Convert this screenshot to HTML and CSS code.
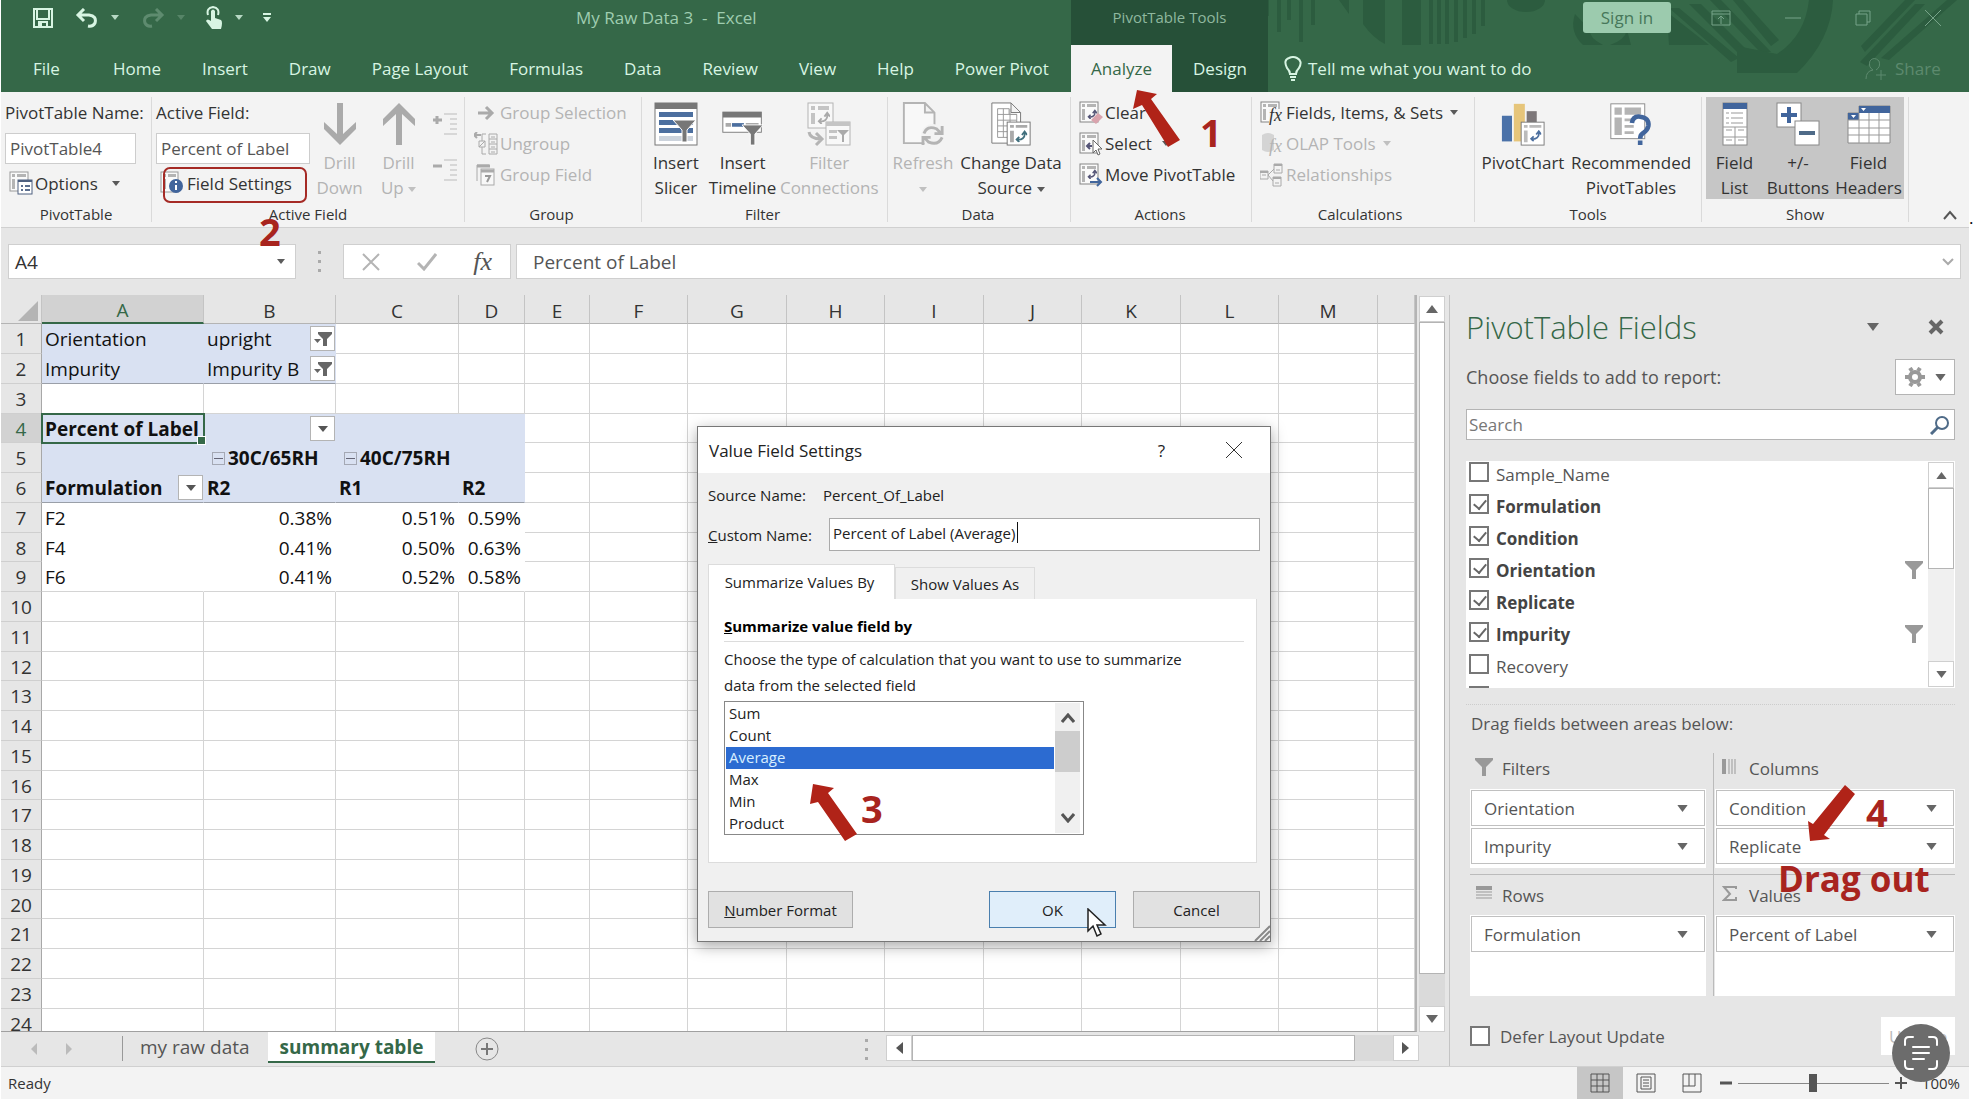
FILE: index.html
```html
<!DOCTYPE html>
<html lang="en">
<head>
<meta charset="utf-8">
<title>My Raw Data 3 - Excel</title>
<link rel="stylesheet" href="styles.css">
</head>
<body>
<!-- shared icons -->
<svg class="defs" width="0" height="0">
  <symbol id="caret" viewBox="0 0 10 6"><path d="M0 0H10L5 6Z" fill="currentColor"/></symbol>
  <symbol id="tri-up" viewBox="0 0 12 8"><path d="M6 0L12 8H0Z" fill="#666"/></symbol>
  <symbol id="tri-down" viewBox="0 0 12 8"><path d="M0 0H12L6 8Z" fill="#666"/></symbol>
  <symbol id="funnel" viewBox="0 0 18 18"><path d="M0 0H18V2L11 9V18H7V9L0 2Z" fill="#999"/></symbol>
  <symbol id="filtered" viewBox="0 0 18 16"><path d="M4 1H18V3L13 8V15H9V8L4 3Z" fill="#666"/><path d="M0 8H7L3.500 12Z" fill="#666"/></symbol>
  <symbol id="pivot" viewBox="0 0 22 22">
    <rect x="1" y="1" width="18" height="20" fill="#fafafa" stroke="#858585"/>
    <path d="M3 3H6V6H3ZM8 3H17V6H8ZM3 8H6V19H3Z" fill="#b4b4b4"/>
  </symbol>
  <symbol id="swap" viewBox="0 0 14 14"><path d="M2 11C8 12 12 9 11 3M5 8L2 11L5 14M8 6L11 2L14 6" fill="none" stroke="currentColor" stroke-width="2"/></symbol>
</svg>

<div class="window">
<header class="top">
  <svg class="pattern" width="704" height="92" viewBox="0 0 704 92">
    <g fill="#2a5a3d">
      <path d="M0 0H4V16H0ZM12 0H16V32H12ZM22 0H26V20H22ZM34 0H38V42H34ZM46 0H50V25H46ZM74 0H84V14ZM98 0H120V44Q108 38 98 24ZM137 0H156V45H137ZM164 0H168V44H164ZM172 0H176V44H172ZM180 0H184V44H180ZM189 0H193V42H189ZM198 0H202V38H198ZM207 0H211V34H207ZM216 0H220V26H216Z"/>
      <ellipse cx="261" cy="0" rx="19" ry="12"/>
      <path d="M310 14Q304 32 318 45H338Q324 38 325 30ZM345 45Q360 40 362 30L366 45ZM402 12L444 45H404Z"/>
      <path d="M404 8H414L474 58L466 62ZM424 4H436L488 56L480 60ZM445 0H456L506 52H495ZM468 0H478L514 40L506 46Z"/>
      <path d="M472 46V73H532Q566 40 568 0H544Q540 36 512 54Z"/>
      <path d="M595 62L650 4H660L602 66ZM616 58L682 0H692L624 60ZM596 46L640 0H650L600 52Z"/>
    </g>
  </svg>
  <div class="titlebar">
    <div class="quick">
      <button aria-label="Save"><svg width="20" height="20" viewBox="0 0 20 20"><path d="M1 1H19V19H1ZM4 1V11H16V1M6 19V14H14V19M8 15V19" fill="none" stroke="#d8f5e3" stroke-width="2"/></svg></button>
      <button aria-label="Undo"><svg width="24" height="20" viewBox="0 0 24 20"><path d="M9 1L3 7L9 13M3 7H14Q22 8 20 15Q18 19 13 18" fill="none" stroke="#d8f5e3" stroke-width="3"/></svg><svg class="caret" width="8" height="5"><use href="#caret"/></svg></button>
      <button class="faded" aria-label="Redo"><svg width="24" height="20" viewBox="0 0 24 20"><path d="M15 1L21 7L15 13M21 7H10Q2 8 4 15Q6 19 11 18" fill="none" stroke="#d8f5e3" stroke-width="3"/></svg><svg class="caret" width="8" height="5"><use href="#caret"/></svg></button>
      <button aria-label="Touch mode"><svg width="18" height="24" viewBox="0 0 18 24"><path d="M6 5Q8 2 10 5V12L16 14Q18 16 16 23H7L1 15Q2 12 6 15Z" fill="#d8f5e3"/><path d="M3 9Q1 2 8 1Q15 2 13 9" fill="none" stroke="#d8f5e3" stroke-width="2"/></svg><svg class="caret" width="8" height="5"><use href="#caret"/></svg></button>
      <button class="customize" aria-label="Customize toolbar"><svg width="8" height="9" viewBox="0 0 8 9"><path d="M0 0H8V2H0ZM0 4H8L4 9Z" fill="#d8f5e3"/></svg></button>
    </div>
    <div class="doc-title">My Raw Data 3&nbsp; -&nbsp; Excel</div>
    <div class="tools-title">PivotTable Tools</div>
    <div class="window-buttons">
      <button class="sign-in">Sign in</button>
      <button aria-label="Ribbon options"><svg width="20" height="16" viewBox="0 0 20 16"><path d="M1 1H19V15H1ZM1 4H19M10 14V6M7 9L10 6L13 9" fill="none" stroke="#77a389"/></svg></button>
      <button aria-label="Minimize"><svg width="16" height="16" viewBox="0 0 16 16"><path d="M0 8H16" stroke="#77a389"/></svg></button>
      <button aria-label="Restore"><svg width="16" height="16" viewBox="0 0 16 16"><path d="M1 4H12V15H1ZM4 4V1H15V12H12" fill="none" stroke="#77a389"/></svg></button>
      <button aria-label="Close"><svg width="16" height="16" viewBox="0 0 16 16"><path d="M0 0L16 16M16 0L0 16" stroke="#77a389"/></svg></button>
    </div>
  </div>
  <nav class="tabs">
    <a href="#">File</a><a href="#">Home</a><a href="#">Insert</a><a href="#">Draw</a><a href="#">Page Layout</a><a href="#">Formulas</a><a href="#">Data</a><a href="#">Review</a><a href="#">View</a><a href="#">Help</a><a href="#">Power Pivot</a>
    <a href="#" class="active">Analyze</a>
    <a href="#" class="design">Design</a>
    <button class="tell-me"><svg width="18" height="26" viewBox="0 0 18 26"><path d="M6 18Q6 15 3 12Q-1 4 5 2Q9 0 13 2Q19 5 15 12Q12 15 12 18ZM6 21H12M7 24H11" fill="none" stroke="#d8f5e3" stroke-width="2"/></svg>Tell me what you want to do</button>
    <button class="share"><svg width="22" height="24" viewBox="0 0 22 24"><path d="M1 22Q1 14 8 13Q3 10 5 4Q9 -1 14 4Q16 10 11 13M16 13V23M11 18H21" fill="none" stroke="#5d8a6e" stroke-width="1"/></svg>Share</button>
  </nav>
</header>

<section class="ribbon">
  <div class="group g-pivot">
    <div class="cols"><div class="form-col">
      <label for="ptname">PivotTable Name:</label>
      <input id="ptname" value="PivotTable4">
      <button class="small"><svg width="24" height="24" viewBox="0 0 24 24"><rect x="1" y="1" width="18" height="19" fill="#fafafa" stroke="#999"/><path d="M3 3H6V6H3ZM8 3H17V6H8ZM3 8H6V18H3Z" fill="#b4b4b4"/><rect x="9" y="9" width="14" height="14" fill="#fff" stroke="#4f6180"/><path d="M9 10H23" stroke="#4f6180" stroke-width="2"/><path d="M12 15H14M16 15H21M12 19H14M16 19H21" stroke="#5c6f8f" stroke-width="2"/></svg>Options<svg class="caret wide" width="8" height="5"><use href="#caret"/></svg></button>
    </div></div>
    <h3>PivotTable</h3>
  </div>
  <div class="group g-field">
    <div class="cols">
      <div class="form-col">
        <label for="actfield">Active Field:</label>
        <input id="actfield" value="Percent of Label">
        <button class="small indent"><svg width="24" height="24" viewBox="0 0 24 24"><rect x="1" y="1" width="17" height="20" fill="#fafafa" stroke="#999"/><path d="M3 3H6V6H3ZM8 3H16V6H8ZM3 8H6V18H3Z" fill="#b4b4b4"/><circle cx="16" cy="15" r="7" fill="#41659c"/><path d="M16 14V19M16 10V12" stroke="#fff" stroke-width="2"/></svg>Field Settings</button>
      </div>
      <button class="large off"><svg width="34" height="44" viewBox="0 0 34 44"><path d="M14 1H20V32L33 20V27L17 43L1 27V20L14 32Z" fill="#aaa"/></svg><span>Drill<br>Down</span></button>
      <button class="large off"><svg width="34" height="44" viewBox="0 0 34 44"><path d="M14 43H20V12L33 24V17L17 1L1 17V24L14 12Z" fill="#aaa"/></svg><span>Drill<br>Up <svg class="caret" width="8" height="5"><use href="#caret"/></svg></span></button>
      <div class="expand-col">
        <button aria-label="Expand field"><svg width="24" height="22" viewBox="0 0 24 22"><path d="M0 7H9M4 3V11" stroke="#aaa" stroke-width="3"/><path d="M11 1H24M17 6H24M17 11H24M17 16H24M11 21H24" stroke="#bbb"/></svg></button>
        <button aria-label="Collapse field"><svg width="24" height="22" viewBox="0 0 24 22"><path d="M0 7H9" stroke="#aaa" stroke-width="3"/><path d="M11 1H24M17 6H24M17 11H24M17 16H24M11 21H24" stroke="#bbb"/></svg></button>
      </div>
    </div>
    <h3>Active Field</h3>
  </div>
  <div class="group g-group">
    <div class="cols"><div class="small-col">
      <button class="small off"><svg width="24" height="24" viewBox="0 0 24 24"><path d="M4 12H17M12 6L18 12L12 18" fill="none" stroke="#aaa" stroke-width="3"/></svg>Group Selection</button>
      <button class="small off"><svg width="24" height="24" viewBox="0 0 24 24"><path d="M0 3H7M3 0L0 3L3 6" fill="none" stroke="#aaa" stroke-width="2"/><path d="M15 2H23V22H15ZM15 7H23M15 12H23M15 17H23M5 9H11V15H5ZM5 15L11 9M8 9V2H12M8 15V22H12M17 5H21M17 10H21M17 15H21M17 20H21" fill="none" stroke="#aaa"/></svg>Ungroup</button>
      <button class="small off"><svg width="24" height="24" viewBox="0 0 24 24"><path d="M3 18V2H15" fill="none" stroke="#aaa"/><path d="M3 3H16" stroke="#aaa" stroke-width="3"/><rect x="7" y="6" width="13" height="16" fill="#f8f8f8" stroke="#aaa"/><path d="M7 8H20" stroke="#aaa" stroke-width="3"/><path d="M11 13H16L13 19" fill="none" stroke="#999" stroke-width="2"/></svg>Group Field</button>
    </div></div>
    <h3>Group</h3>
  </div>
  <div class="group g-filter">
    <div class="cols">
      <button class="large"><svg width="44" height="44" viewBox="0 0 44 44"><rect x="1" y="1" width="42" height="42" fill="#fff" stroke="#777"/><path d="M1 1H43V7H1Z" fill="#777"/><path d="M5 10H39V15H5ZM5 18H39V23H5ZM5 26H39V31H5Z" fill="#4c6f9f"/><path d="M5 34H39V39H5Z" fill="#ccd3dc"/><path d="M19 18H42L33 28V40H28V28Z" fill="#777" stroke="#fff"/></svg><span>Insert<br>Slicer</span></button>
      <button class="large"><svg width="46" height="48" viewBox="0 0 46 48"><rect x="1" y="11" width="42" height="22" fill="#fff" stroke="#777"/><path d="M1 11H43V17H1Z" fill="#777"/><path d="M4 23H10V27H4ZM26 23H40V27H26Z" fill="#aaa"/><path d="M11 23H24V27H11Z" fill="#4c6f9f"/><path d="M22 25H45L36 35V47H31V35Z" fill="#777" stroke="#fff"/></svg><span>Insert<br>Timeline</span></button>
      <button class="large off"><svg width="44" height="44" viewBox="0 0 44 44" color="#aaa"><g fill="#f8f8f8" stroke="#b4b4b4"><rect x="1" y="1" width="25" height="25"/><rect x="19" y="20" width="24" height="23"/></g><path d="M4 4H8V8H4ZM11 4H22V8H11ZM4 11H8V22H4ZM19 20H43V24H19ZM22 28H30V31H22ZM22 34H30V37H22Z" fill="#c4c4c4"/><use href="#swap" x="10" y="9" width="13" height="13"/><path d="M30 28H42L37 33V40H35V33Z" fill="#aaa"/><path d="M2 30Q3 37 14 37M9 31L15 37L9 43" fill="none" stroke="#b4b4b4" stroke-width="3"/></svg><span>Filter<br>Connections</span></button>
    </div>
    <h3>Filter</h3>
  </div>
  <div class="group g-data">
    <div class="cols">
      <button class="large off"><svg width="44" height="46" viewBox="0 0 44 46"><path d="M2 1H24L34 11V43H2ZM24 1V11H34" fill="#f8f8f8" stroke="#b4b4b4" stroke-width="2"/><circle cx="32" cy="35" r="12" fill="#f3f3f3"/><path d="M23 33Q26 24 36 28L40 32M42 25V33H34M42 37Q38 46 28 42L24 38M22 45V37H30" fill="none" stroke="#b4b4b4" stroke-width="3"/></svg><span>Refresh<br><svg class="caret" width="8" height="5"><use href="#caret"/></svg></span></button>
      <button class="large"><svg width="44" height="46" viewBox="0 0 44 46"><path d="M2 1H22L32 11V43H2ZM22 1V11H32" fill="#fff" stroke="#777"/><path d="M8 7H20V13H28V37H8ZM8 13H28M8 19H28M8 25H28M8 31H28M14 7V37M21 7V37" fill="none" stroke="#999"/><rect x="18" y="21" width="24" height="24" fill="#fff" stroke="#777"/><path d="M21 24H25V27H21ZM27 24H39V27H27ZM21 30H25V42H21Z" fill="#aaa"/><g color="#41707e"><use href="#swap" x="26" y="29" width="13" height="13"/></g></svg><span>Change Data<br>Source <svg class="caret" width="8" height="5"><use href="#caret"/></svg></span></button>
    </div>
    <h3>Data</h3>
  </div>
  <div class="group g-actions">
    <div class="cols"><div class="small-col">
      <button class="small"><svg width="24" height="24" viewBox="0 0 24 24"><use href="#pivot" width="22" height="22"/><g color="#557"><use href="#swap" x="8" y="8" width="10" height="10"/></g><path d="M12 19L19 12L24 16L17 23Z" fill="#d9a3ad"/></svg>Clear</button>
      <button class="small"><svg width="24" height="24" viewBox="0 0 24 24"><use href="#pivot" width="22" height="22"/><path d="M13 14H8M11 11L8 14L11 17" fill="none" stroke="#557" stroke-width="2"/><path d="M14 8V21L17 18L19 23L21 22L19 17H23Z" fill="#fff" stroke="#666"/></svg>Select<svg class="caret gap" width="8" height="5"><use href="#caret"/></svg></button>
      <button class="small"><svg width="24" height="24" viewBox="0 0 24 24"><use href="#pivot" width="22" height="22"/><g color="#557"><use href="#swap" x="8" y="6" width="10" height="10"/></g><path d="M11 19H22M18 15L22 19L18 23" fill="none" stroke="#41659c" stroke-width="2"/></svg>Move PivotTable</button>
    </div></div>
    <h3>Actions</h3>
  </div>
  <div class="group g-calc">
    <div class="cols"><div class="small-col">
      <button class="small"><svg width="24" height="24" viewBox="0 0 24 24"><use href="#pivot" width="22" height="22"/><rect x="9" y="8" width="15" height="16" fill="#f3f3f3"/><text x="9" y="20" class="fx-icon">fx</text></svg>Fields, Items, &amp; Sets<svg class="caret" width="8" height="5"><use href="#caret"/></svg></button>
      <button class="small off"><svg width="24" height="24" viewBox="0 0 24 24"><path d="M2 3Q8 -1 14 3V18Q8 22 2 18Z" fill="#d4d4d4"/><text x="9" y="20" class="fx-icon">fx</text></svg>OLAP Tools<svg class="caret" width="8" height="5"><use href="#caret"/></svg></button>
      <button class="small off"><svg width="24" height="24" viewBox="0 0 24 24"><path d="M0 8H8V16H0ZM14 1H22V10H14ZM13 14H21V23H13ZM8 12L14 6M8 12L13 18M2 12H6M16 7H20M15 20H19" fill="none" stroke="#aaa"/><path d="M0 9H8M14 2H22M13 15H21" stroke="#aaa" stroke-width="2"/></svg>Relationships</button>
    </div></div>
    <h3>Calculations</h3>
  </div>
  <div class="group g-tools">
    <div class="cols">
      <button class="large"><svg width="48" height="48" viewBox="0 0 48 48"><path d="M1 15H12V43H1Z" fill="#4a71a8"/><path d="M14 2H26V43H14Z" fill="#e6c57a"/><path d="M28 10H39V22H28Z" fill="#7d7779"/><rect x="22" y="22" width="25" height="25" fill="#fff" stroke="#777"/><path d="M25 25H29V28H25ZM31 25H44V28H31ZM25 31H29V44H25Z" fill="#bbb"/><g color="#4c6f9f"><use href="#swap" x="31" y="30" width="13" height="13"/></g></svg><span>PivotChart</span></button>
      <button class="large"><svg width="46" height="48" viewBox="0 0 46 48"><rect x="1" y="2" width="37" height="38" fill="#fff" stroke="#888"/><path d="M5 6H13V14H5ZM16 6H34V14H16ZM5 17H13V36H5ZM16 18H26V21H16ZM16 25H26V28H16ZM16 32H26V35H16Z" fill="#b4b4b4"/><path d="M24 23Q25 15 33 16Q43 17 42 26Q41 31 36 34Q33 36 33 40M33 42V47" fill="none" stroke="#41659c" stroke-width="5"/></svg><span>Recommended<br>PivotTables</span></button>
    </div>
    <h3>Tools</h3>
  </div>
  <div class="group g-show">
    <div class="cols">
      <button class="large pressed"><svg width="26" height="44" viewBox="0 0 26 44"><rect x="1" y="1" width="24" height="42" fill="#fff" stroke="#888"/><path d="M1 1H25V7H1Z" fill="#41659c"/><path d="M4 11H7M9 11H21M4 16H7M9 16H21M4 21H7M9 21H21M1 25H25M1 35H25M13 25V43M4 28H10M16 28H22M4 38H10M16 38H22" stroke="#999"/></svg><span>Field<br>List</span></button>
      <button class="large pressed"><svg width="44" height="44" viewBox="0 0 44 44"><rect x="1" y="1" width="24" height="24" fill="#fff" stroke="#888"/><path d="M5 13H21M13 5V21" stroke="#41659c" stroke-width="4"/><rect x="19" y="19" width="24" height="24" fill="#fff" stroke="#888"/><path d="M23 31H39" stroke="#4f6b88" stroke-width="4"/></svg><span>+/-<br>Buttons</span></button>
      <button class="large pressed"><svg width="42" height="44" viewBox="0 0 42 44"><path d="M11 4H42V41H0V11H11Z" fill="#fff" stroke="#888"/><path d="M11 4H42V11H11ZM0 11H11V18H0Z" fill="#41659c"/><path d="M13 6H18L15.500 9ZM3 13H8L5.500 16Z" fill="#fff"/><path d="M0 18H42M0 26H42M0 33H42M11 11V41M21 11V41M31 11V41" stroke="#999"/></svg><span>Field<br>Headers</span></button>
    </div>
    <h3>Show</h3>
  </div>
  <button class="collapse" aria-label="Collapse ribbon"><svg width="14" height="10" viewBox="0 0 14 10"><path d="M1 9L7 2L13 9" fill="none" stroke="#555" stroke-width="2"/></svg></button>
</section>

<section class="formula-bar">
  <button class="name-box">A4<svg class="caret" width="8" height="5"><use href="#caret"/></svg></button>
  <span class="dots"></span>
  <div class="fx-box">
    <button aria-label="Cancel"><svg width="18" height="18" viewBox="0 0 18 18"><path d="M1 1L17 17M17 1L1 17" stroke="#b4b4b4" stroke-width="2"/></svg></button>
    <button aria-label="Enter"><svg width="20" height="18" viewBox="0 0 20 18"><path d="M1 10L7 16L19 1" fill="none" stroke="#b4b4b4" stroke-width="3"/></svg></button>
    <button class="fx">fx</button>
  </div>
  <div class="formula"><input value="Percent of Label" aria-label="Formula"><svg width="12" height="8" viewBox="0 0 12 8"><path d="M1 1L6 6L11 1" fill="none" stroke="#aaa" stroke-width="2"/></svg></div>
</section>

<main class="workspace">
  <div class="book">
    <div class="sheet-row">
      <div class="sheet">
        <table>
          <colgroup><col class="c-num"><col class="c-a"><col class="c-b"><col class="c-c"><col class="c-d"><col class="c-e"><col class="c-98"><col class="c-99"><col class="c-98"><col class="c-99"><col class="c-98"><col class="c-99"><col class="c-98"><col class="c-99"><col></colgroup>
          <thead><tr id="letters"></tr></thead>
          <tbody id="rows"></tbody>
        </table>
      </div>
      <div class="vscroll">
        <button aria-label="Scroll up"><svg width="12" height="8"><use href="#tri-up"/></svg></button>
        <div class="thumb"></div>
        <div class="track"></div>
        <button aria-label="Scroll down"><svg width="12" height="8"><use href="#tri-down"/></svg></button>
      </div>
    </div>
    <div class="sheet-tabs">
      <div class="sheet-nav">
        <svg width="6" height="12" viewBox="0 0 6 12"><path d="M6 0V12L0 6Z" fill="#bbb"/></svg>
        <svg width="6" height="12" viewBox="0 0 6 12"><path d="M0 0V12L6 6Z" fill="#bbb"/></svg>
      </div>
      <a href="#" class="sheet-tab">my raw data</a>
      <a href="#" class="sheet-tab current">summary table</a>
      <button class="new-sheet" aria-label="New sheet"><svg width="24" height="24" viewBox="0 0 24 24"><circle cx="12" cy="12" r="11" fill="none" stroke="#888"/><path d="M6 12H18M12 6V18" stroke="#777" stroke-width="2"/></svg></button>
      <span class="dots"></span>
      <div class="hscroll">
        <button aria-label="Scroll left"><svg width="8" height="12" viewBox="0 0 8 12"><path d="M8 0V12L1 6Z" fill="#555"/></svg></button>
        <div class="thumb"></div>
        <div class="track"></div>
        <button aria-label="Scroll right"><svg width="8" height="12" viewBox="0 0 8 12"><path d="M0 0V12L7 6Z" fill="#555"/></svg></button>
      </div>
    </div>
  </div>

  <aside class="pane">
    <div class="pane-head">
      <h2>PivotTable Fields</h2>
      <button aria-label="Pane options"><svg width="14" height="8" viewBox="0 0 12 8"><use href="#tri-down"/></svg></button>
      <button aria-label="Close pane"><svg width="16" height="16" viewBox="0 0 16 16"><path d="M2 2L14 14M14 2L2 14" stroke="#666" stroke-width="4"/></svg></button>
    </div>
    <div class="choose">
      <span>Choose fields to add to report:</span>
      <button class="gear" aria-label="Tools"><svg width="22" height="20" viewBox="-11 -10 22 20"><circle r="5" fill="none" stroke="#999" stroke-width="4"/><g stroke="#999" stroke-width="4"><path d="M-10 0H-6M6 0H10M-5 -9L-3 -6M3 6L5 9M-5 9L-3 6M3 -6L5 -9"/></g></svg><svg width="11" height="7" viewBox="0 0 12 8"><use href="#tri-down"/></svg></button>
    </div>
    <div class="search"><input placeholder="Search" aria-label="Search fields"><svg width="20" height="20" viewBox="0 0 20 20"><circle cx="12" cy="8" r="6" fill="none" stroke="#4f6b88" stroke-width="2"/><path d="M8 12L1 19" stroke="#4f6b88" stroke-width="3"/></svg></div>
    <div class="field-list">
      <ul>
        <li><label><input type="checkbox">Sample_Name</label></li>
        <li><label><input type="checkbox" checked>Formulation</label></li>
        <li><label><input type="checkbox" checked>Condition</label></li>
        <li><label><input type="checkbox" checked>Orientation</label><svg width="18" height="18"><use href="#funnel"/></svg></li>
        <li><label><input type="checkbox" checked>Replicate</label></li>
        <li><label><input type="checkbox" checked>Impurity</label><svg width="18" height="18"><use href="#funnel"/></svg></li>
        <li><label><input type="checkbox">Recovery</label></li>
        <li><input type="checkbox" aria-label="Next field"></li>
      </ul>
      <div class="vscroll">
        <button aria-label="Scroll up"><svg width="11" height="7" viewBox="0 0 12 8"><use href="#tri-up"/></svg></button>
        <div class="thumb"></div>
        <div class="track"></div>
        <button aria-label="Scroll down"><svg width="11" height="7" viewBox="0 0 12 8"><use href="#tri-down"/></svg></button>
      </div>
    </div>
    <p class="drag-hint">Drag fields between areas below:</p>
    <div class="areas">
      <section class="area">
        <h4><svg width="18" height="18"><use href="#funnel"/></svg>Filters</h4>
        <div class="well">
          <button>Orientation<svg width="11" height="7" viewBox="0 0 12 8"><use href="#tri-down"/></svg></button>
          <button>Impurity<svg width="11" height="7" viewBox="0 0 12 8"><use href="#tri-down"/></svg></button>
        </div>
      </section>
      <section class="area">
        <h4><svg width="18" height="18" viewBox="0 0 18 18"><path d="M2 1V16" stroke="#999" stroke-width="4"/><path d="M7 1V16M10 1V16M13 1V16" stroke="#999"/></svg>Columns</h4>
        <div class="well">
          <button>Condition<svg width="11" height="7" viewBox="0 0 12 8"><use href="#tri-down"/></svg></button>
          <button>Replicate<svg width="11" height="7" viewBox="0 0 12 8"><use href="#tri-down"/></svg></button>
        </div>
      </section>
      <section class="area low">
        <h4><svg width="18" height="18" viewBox="0 0 18 18"><path d="M1 3H17" stroke="#999" stroke-width="4"/><path d="M1 7H17M1 10H17M1 13H17" stroke="#999"/></svg>Rows</h4>
        <div class="well">
          <button>Formulation<svg width="11" height="7" viewBox="0 0 12 8"><use href="#tri-down"/></svg></button>
        </div>
      </section>
      <section class="area low">
        <h4><svg width="18" height="18" viewBox="0 0 18 18"><path d="M14 4V2H2L8 9L2 15H14V12" fill="none" stroke="#999" stroke-width="2"/></svg>Values</h4>
        <div class="well">
          <button>Percent of Label<svg width="11" height="7" viewBox="0 0 12 8"><use href="#tri-down"/></svg></button>
        </div>
      </section>
    </div>
    <div class="defer">
      <label><input type="checkbox">Defer Layout Update</label>
      <button disabled>Update</button>
    </div>
  </aside>
</main>

<footer class="status">
  <span>Ready</span>
  <div class="views">
    <button class="on" aria-label="Normal"><svg width="20" height="20" viewBox="0 0 20 20"><path d="M1 1H19V19H1ZM1 7H19M1 13H19M7 1V19M13 1V19" fill="none" stroke="#555"/></svg></button>
    <button aria-label="Page layout"><svg width="20" height="20" viewBox="0 0 20 20"><path d="M1 1H19V19H1ZM5 4H15V16H5ZM7 7H13M7 10H13M7 13H13" fill="none" stroke="#555"/></svg></button>
    <button aria-label="Page break"><svg width="20" height="20" viewBox="0 0 20 20"><path d="M1 1H19V19H1ZM1 13H13V1M7 1V13" fill="none" stroke="#555"/></svg></button>
  </div>
  <div class="zoom">
    <button aria-label="Zoom out"><svg width="12" height="12" viewBox="0 0 12 12"><path d="M0 6H12" stroke="#555" stroke-width="3"/></svg></button>
    <input type="range" min="0" max="100" value="50" aria-label="Zoom">
    <button aria-label="Zoom in"><svg width="12" height="12" viewBox="0 0 12 12"><path d="M0 6H12M6 0V12" stroke="#555" stroke-width="2"/></svg></button>
    <span>100%</span>
  </div>
</footer>
</div>

<form class="dialog" onsubmit="return false">
  <div class="dialog-title">
    <h2>Value Field Settings</h2>
    <button type="button">?</button>
    <button type="button" aria-label="Close"><svg width="18" height="18" viewBox="0 0 18 18"><path d="M1 1L17 17M17 1L1 17" stroke="#333"/></svg></button>
  </div>
  <div class="dialog-body">
    <div class="source"><span>Source Name:</span><span>Percent_Of_Label</span></div>
    <div class="custom"><label for="custom"><u>C</u>ustom Name:</label><div class="caret-wrap"><input id="custom" value="Percent of Label (Average)"><i class="text-caret"></i></div></div>
    <div class="dialog-tabs"><button type="button" class="current">Summarize Values By</button><button type="button">Show Values As</button></div>
    <div class="panel">
      <h3><label for="calc"><u>S</u>ummarize value field by</label></h3>
      <p>Choose the type of calculation that you want to use to summarize data from the selected field</p>
      <div class="listbox">
        <select id="calc" size="6">
          <option>Sum</option><option>Count</option><option selected>Average</option><option>Max</option><option>Min</option><option>Product</option>
        </select>
        <div class="list-scroll">
          <svg width="14" height="10" viewBox="0 0 14 10"><path d="M1 9L7 2L13 9" fill="none" stroke="#555" stroke-width="3"/></svg>
          <div class="thumb"></div>
          <svg width="14" height="10" viewBox="0 0 14 10"><path d="M1 1L7 8L13 1" fill="none" stroke="#555" stroke-width="3"/></svg>
        </div>
      </div>
    </div>
    <div class="dialog-buttons">
      <button type="button" class="format"><u>N</u>umber Format</button>
      <button type="button" class="ok">OK</button>
      <button type="button">Cancel</button>
    </div>
  </div>
  <svg class="grip" width="16" height="16" viewBox="0 0 16 16"><path d="M1 16L16 1M6 16L16 6M11 16L16 11" stroke="#888" stroke-width="2"/></svg>
</form>
<svg class="pointer" width="20" height="30" viewBox="0 0 20 30"><path d="M1 1V23L6 18L10 28L14 26L10 17H18Z" fill="#fff" stroke="#222" stroke-width="1.500"/></svg>

<!-- tutorial marks -->
<div class="mark-box"></div>
<svg class="arrow a1" width="50" height="60" viewBox="0 0 50 60"><path d="M7 0L27 4L21 9L50 50L38 57L12 15L3 19Z"/></svg>
<svg class="arrow a3" width="50" height="60" viewBox="0 0 50 60"><path d="M3 0L24 4L18 9L47 50L35 57L8 18L0 20Z"/></svg>
<svg class="arrow a4" width="50" height="60" viewBox="0 0 50 60"><path d="M37 0L47 9L16 50L22 54L2 56L0 36L5 39Z"/></svg>
<b class="mark m1">1</b>
<b class="mark m2">2</b>
<b class="mark m3">3</b>
<b class="mark m4">4</b>
<b class="mark m-out">Drag out</b>
<button class="scan" aria-label="Scan text"><svg width="34" height="34" viewBox="0 0 34 34"><path d="M1 9V5Q1 1 5 1H9M25 1H29Q33 1 33 5V9M33 25V29Q33 33 29 33H25M9 33H5Q1 33 1 29V25M9 11H25M9 17H25M9 23H20" fill="none" stroke="#fff" stroke-width="2" stroke-linecap="round"/></svg></button>
<span class="speck">.</span>
<script src="grid.js"></script>
</body>
</html>
```

FILE: styles.css
```css
* { box-sizing: border-box; }
body { margin: 0; background: #fff; font-family: "Open Sans", "Noto Sans", sans-serif; font-size: 17px; color: #333; position: relative; overflow: hidden; }
button { background: none; border: none; padding: 0; font: inherit; color: inherit; cursor: pointer; display: flex; align-items: center; }
input { font: inherit; color: inherit; }
a { color: inherit; text-decoration: none; }
h2, h3, h4, p, ul { margin: 0; padding: 0; font-size: inherit; font-weight: 400; list-style: none; }
svg { flex: none; display: block; }
.defs { position: absolute; }
.window { height: 100vh; margin: 0 7px 0 1px; display: flex; flex-direction: column; background: #e6e6e6; }

/* title bar */
.top { background: #356848; color: #d8f5e3; position: relative; }
.pattern { position: absolute; right: 0; top: 0; opacity: 0.8; }
.titlebar { display: flex; height: 45px; position: relative; }
.quick { display: flex; align-items: center; width: 575px; height: 35px; padding-left: 32px; gap: 22px; }
.quick button { gap: 12px; }
.quick .faded { opacity: 0.25; }
.quick .customize { margin-left: 4px; }
.quick button:nth-child(n+4) { margin-left: -2px; }
.doc-title { flex: 1; font-size: 17px; line-height: 35px; color: #9fcdb0; }
.tools-title { width: 197px; background: #265038; font-size: 15px; line-height: 35px; text-align: center; color: #8fb89f; }
.window-buttons { width: 701px; display: flex; height: 35px; align-items: center; justify-content: flex-end; gap: 54px; padding-right: 28px; }
.sign-in { width: 88px; height: 31px; background: #9ccbae; color: #47775a; border-radius: 3px; justify-content: center; }
.window-buttons .sign-in { margin-right: -14px; }
.tabs { display: flex; gap: 1px; height: 47px; position: relative; padding-left: 12px; line-height: 47px; }
.tabs a { padding: 0 20px; }
.tabs a:first-child { margin-right: 12px; }
.tabs .active { background: #f3f3f3; color: #356848; margin: 0 -1px 0 auto; width: 101px; text-align: center; padding: 0; }
.tabs .design { background: #265038; width: 96px; text-align: center; padding: 0; }
.tell-me { width: 595px; padding-left: 15px; gap: 6px; }
.share { width: 104px; color: #5d8a6e; gap: 8px; }

/* ribbon */
.ribbon { display: flex; background: #f3f3f3; border-bottom: 1px solid #d0d0d0; padding: 5px 0 0; height: 136px; }
.group { border-right: 1px solid #dadada; margin-bottom: 5px; display: flex; flex-direction: column; padding: 0 4px; }
.group h3 { font-size: 15px; text-align: center; line-height: 16px; margin-top: auto; }
.cols { display: flex; height: 102px; }
.g-pivot { width: 151px; }
.g-field { width: 313px; }
.g-group { width: 177px; padding: 0 12px 0 9px; }
.g-filter { width: 246px; padding: 0 6px 0 2px; }
.g-data { width: 183px; padding-left: 2px; }
.g-actions { width: 181px; padding: 0 10px 0 8px; }
.g-calc { width: 223px; padding: 0 14px 0 8px; }
.g-tools { width: 227px; }
.g-show { width: 207px; }
.form-col { display: flex; flex-direction: column; gap: 4px; width: 154px; flex: none; }
.form-col label { line-height: 32px; white-space: nowrap; }
.form-col input { height: 31px; border: 1px solid #cdcdcd; background: #fff; padding: 1px 4px 0; width: 100%; color: #555; }
.g-pivot .form-col { width: 131px; }
.form-col .small { height: 32px; padding-left: 4px; }
.form-col .small.indent { gap: 3px; }
.small-col { display: flex; flex-direction: column; }
.small { height: 31px; gap: 2px; white-space: nowrap; }
.off { color: #b4b4b4; }
.caret { color: inherit; display: inline-block; opacity: 0.8; margin-left: 5px; vertical-align: middle; }
.caret.wide { margin-left: 12px; }
.caret.gap { margin-left: 8px; }
.quick .caret, .large .caret { margin-left: 0; }
.large { flex-direction: column; padding-top: 5px; white-space: nowrap; }
.large > svg { height: 44px; overflow: visible; }
.large span { line-height: 25px; margin-top: 4px; text-align: center; }
.g-field .large { width: 59px; }
.expand-col { display: flex; flex-direction: column; gap: 24px; padding: 16px 0 0 5px; }
.g-filter .large { width: 64px; }
.g-filter .large:nth-child(2) { width: 70px; }
.g-filter .large:nth-child(3) { width: 104px; }
.g-data .large { width: 66px; }
.g-data .large:last-child { width: 110px; }
.g-tools .large { width: 88px; }
.g-tools .large:last-child { width: 128px; }
.fx-icon { font: italic 18px "Liberation Serif", serif; fill: currentColor; }
.pressed { background: #c6c6c6; }
.g-show .large { width: 57px; }
.g-show .large:nth-child(2) { width: 70px; }
.g-show .large:nth-child(3) { width: 71px; }
.collapse { margin: auto 12px 7px auto; }

/* formula bar */
.formula-bar { display: flex; padding: 16px 8px 16px 7px; font-size: 19px; }
.formula-bar > div, .name-box { height: 35px; background: #fff; border: 1px solid #cfcfcf; }
.name-box { width: 288px; justify-content: space-between; padding: 0 10px 0 6px; }
.dots { width: 3px; height: 21px; background: repeating-linear-gradient(#aaa 0 3px, transparent 3px 9px); margin: 7px 22px 0; }
.fx-box { display: flex; width: 168px; padding: 0 18px; justify-content: space-between; }
.fx { font: italic 26px "Liberation Serif", serif; color: #555; }
.formula { flex: 1; margin-left: 5px; display: flex; align-items: center; padding: 0 6px 0 16px; }
.formula input { border: none; flex: 1; padding: 0; color: #555; }

/* sheet */
.workspace { flex: 1; display: flex; min-height: 0; }
.book { flex: 1; display: flex; flex-direction: column; min-width: 0; border-right: 1px solid #c4c4c4; }
.sheet-row { flex: 1; display: flex; min-height: 0; }
.sheet { flex: 1; overflow: hidden; border-right: 2px solid #b4b4b4; border-bottom: 1px solid #a0a0a0; }
.sheet table { width: 100%; border-collapse: separate; border-spacing: 0; table-layout: fixed; background: #fff; font-size: 19px; color: #111; }
.sheet th { background: #e6e6e6; font-weight: 400; padding: 0; color: #333; border-right: 1px solid #c4c4c4; border-bottom: 1px solid #b4b4b4; }
.sheet thead th { padding-top: 3px; }
.sheet tbody th { border-bottom-color: #cfcfcf; border-right-color: #a8a8a8; }
.sheet thead tr { height: 29px; }
.sheet tbody tr { height: 30px; }
.sheet tbody tr:nth-child(4n) { height: 29px; }
.sheet th, .sheet td { line-height: 24px; }
.sheet td { border-right: 1px solid #d4d4d4; border-bottom: 1px solid #d4d4d4; padding: 1px 3px 0; white-space: nowrap; position: relative; }
.sheet tbody th { padding-top: 1px; }
.sheet .corner { padding: 0; }
.sheet .corner svg { margin: 4px 3px 0 auto; }
.sheet th.sel { background: #d2d2d2; color: #356848; }
.sheet thead th.sel { border-bottom: 2px solid #356848; }
.sheet td.fill { background: #d9e1f2; border-color: #d9e1f2; }
.sheet td.edge { border-bottom-color: #9a9fa8; }
.sheet td.plain { border-color: #fff; }
.sheet tr:nth-child(9) td.plain { border-bottom-color: #d4d4d4; }
.sheet td.bold { font-weight: 700; }
.sheet td.num { text-align: right; }
.sheet td.cursor { outline: 2px solid #356848; outline-offset: -1px; z-index: 1; }
.sheet td.cursor::after { content: ""; position: absolute; right: -3px; bottom: -3px; width: 7px; height: 7px; background: #356848; border: 1px solid #fff; }
.drop { position: absolute; right: 0; top: 2px; width: 25px; height: 25px; background: #fff; border: 1px solid #b4b4b4; justify-content: center; color: #555; }
.minus { display: inline-block; width: 13px; height: 13px; border: 1px solid #a4a8b4; margin: 0 3px 0 5px; background: linear-gradient(#667, #667) center / 9px 1px no-repeat; }
.c-num { width: 41px; }
.c-a { width: 162px; }
.c-b { width: 132px; }
.c-c { width: 123px; }
.c-d { width: 66px; }
.c-e { width: 65px; }
.c-98 { width: 98px; }
.c-99 { width: 99px; }
.vscroll { width: 26px; margin: 1px 4px 0 2px; display: flex; flex-direction: column; background: #dadada; }
.vscroll button { height: 26px; background: #fff; border: 1px solid #cfcfcf; justify-content: center; flex: none; }
.thumb { background: #fff; border: 1px solid #b4b4b4; }
.vscroll .thumb { flex: 654; }
.vscroll .track { flex: 32; }
.sheet-tabs { display: flex; height: 34px; color: #555; }
.sheet-nav { width: 122px; border-right: 1px solid #999; margin: 4px 0 5px; display: flex; align-items: center; gap: 29px; padding-left: 30px; }
.sheet-tab { padding: 0 18px 0 17px; line-height: 31px; height: 31px; font-size: 19px; }
.sheet-tab.current { background: #fff; color: #356848; font-weight: 700; border-bottom: 2px solid #356848; padding: 0 12px; }
.new-sheet { margin: 0 auto 0 40px; }
.sheet-tabs .dots { margin: 7px 18px; }
.hscroll { width: 533px; height: 26px; margin: 3px 30px 0 0; display: flex; background: #dadada; }
.hscroll button { width: 26px; background: #fff; border: 1px solid #cfcfcf; justify-content: center; }
.hscroll .thumb { flex: 443; }
.hscroll .track { flex: 38; }

/* field pane */
.pane { width: 519px; padding: 0 14px 0 16px; color: #555; }
.pane-head { display: flex; align-items: center; height: 64px; padding-right: 11px; gap: 48px; }
.pane-head h2 { font-size: 31px; font-weight: 300; color: #356848; margin-right: auto; }
.choose { display: flex; justify-content: space-between; align-items: center; height: 36px; font-size: 18px; }
.gear { width: 60px; height: 36px; border: 1px solid #b4b4b4; background: #fff; justify-content: center; gap: 9px; }
.search { display: flex; align-items: center; height: 31px; background: #fff; border: 1px solid #b4b4b4; margin: 14px 0 21px; padding-right: 4px; }
.search input { flex: 1; border: none; background: none; padding: 0 2px; }
.search input::placeholder { color: #777; }
.field-list { display: flex; height: 227px; background: #fff; overflow: hidden; }
.field-list ul { flex: 1; margin-top: -3px; }
.field-list li { height: 32px; display: flex; justify-content: space-between; align-items: center; padding: 0 4px 0 3px; }
.field-list label { display: flex; align-items: center; gap: 7px; }
.field-list label:has(:checked) { font-weight: 700; color: #444; }
.field-list input, .defer input { appearance: none; width: 20px; height: 20px; margin: 0; border: 2px solid #777; background: #fff; position: relative; }
.field-list input { margin-bottom: 4px; }
.field-list input:checked::after { content: ""; position: absolute; left: 5px; top: 1px; width: 6px; height: 10px; border: solid #666; border-width: 0 2px 2px 0; transform: rotate(40deg); }
.field-list .vscroll { margin: 1px 1px; width: 26px; background: #f0f0f0; }
.field-list .thumb { flex: 81; }
.field-list .track { flex: 94; }
.drag-hint { border-top: 1px dotted #ccc; margin-top: 16px; line-height: 38px; padding-left: 5px; }
.areas { display: grid; grid-template-columns: 243px 1fr; margin: 10px 0 0 4px; }
.area { padding: 0 7px 6px 0; }
.area:nth-child(even) { border-left: 1px solid #bbb; padding: 0 0 6px 1px; }
.area.low { border-top: 1px solid #bbb; padding-bottom: 0; }
.area h4 { display: flex; align-items: center; gap: 9px; height: 36px; padding: 0 0 5px 5px; }
.area:nth-child(even) h4 { padding-left: 7px; }
.area h4 svg { margin-bottom: 4px; }
.low h4 { height: 40px; padding-top: 6px; }
.well { background: #fff; padding: 1px; height: 79px; display: flex; flex-direction: column; gap: 2px; }
.low .well { height: 81px; }
.well button { height: 36px; border: 1px solid #c0c0c0; justify-content: space-between; padding: 0 16px 0 12px; }
.defer { display: flex; justify-content: space-between; align-items: center; margin-top: 21px; height: 38px; padding-left: 4px; }
.defer label { display: flex; gap: 10px; align-items: center; }
.defer button { background: #fff; color: #bbb; width: 74px; height: 38px; padding-left: 8px; }

/* status bar */
.status { height: 33px; background: #f3f3f3; border-top: 1px solid #d0d0d0; display: flex; align-items: center; font-size: 15px; padding: 0 9px 0 7px; }
.views { display: flex; margin-left: auto; height: 100%; }
.views button { width: 46px; justify-content: center; }
.views .on { background: #c6c6c6; }
.zoom { display: flex; align-items: center; gap: 6px; margin-left: 5px; }
.zoom input { appearance: none; width: 151px; height: 20px; margin: 0; background: linear-gradient(#888, #888) center / 100% 1px no-repeat; }
.zoom input::-webkit-slider-thumb { appearance: none; width: 8px; height: 18px; background: #555; }
.zoom span { margin-left: 9px; }

/* dialog */
.dialog { position: absolute; left: 697px; top: 426px; width: 574px; border: 1px solid #777; background: #f0f0f0; box-shadow: 0 4px 14px rgba(0,0,0,0.35); font-size: 15px; color: #222; }
.dialog-title { display: flex; align-items: center; background: #fff; height: 46px; padding: 0 27px 0 11px; font-size: 17px; gap: 60px; }
.dialog-title h2 { margin-right: auto; }
.dialog-body { padding: 10px 10px 13px; }
.source, .custom { display: flex; align-items: center; height: 24px; }
.source span:first-child { width: 115px; }
.custom { height: 33px; margin-top: 11px; }
.custom label { width: 121px; }
.caret-wrap { flex: 1; position: relative; height: 33px; }
.custom input { width: 100%; height: 33px; border: 1px solid #aaa; background: #fff; padding: 0 3px 4px; }
.text-caret { position: absolute; left: 188px; top: 4px; width: 1px; height: 21px; background: #111; }
.dialog-tabs { display: flex; align-items: flex-end; margin-top: 13px; }
.dialog-tabs button { height: 32px; width: 140px; justify-content: center; border: 1px solid #dcdcdc; border-bottom: none; }
.dialog-tabs .current { width: 187px; height: 35px; background: #fff; padding-right: 4px; }
.panel { background: #fff; border: 1px solid #dcdcdc; border-top: none; height: 264px; padding: 12px 12px 0 15px; margin-right: 3px; }
.panel h3 { font-weight: 700; line-height: 30px; border-bottom: 1px solid #dcdcdc; color: #000; }
.panel p { line-height: 26px; margin: 4px 0 3px; max-width: 490px; }
.listbox { width: 360px; height: 134px; border: 1px solid #888; display: flex; background: #fff; padding: 1px; }
.listbox select { flex: 1; border: none; outline: none; overflow: hidden; font: inherit; color: inherit; padding: 0; background: #fff; }
.listbox option { height: 22px; line-height: 22px; min-height: 22px; padding: 0 3px; }
.listbox option:checked { background: linear-gradient(#2c6bd1, #2c6bd1); color: #d8efff; -webkit-text-fill-color: #d8efff; }
.list-scroll { width: 25px; margin: 0 2px 0 1px; background: #f0f0f0; display: flex; flex-direction: column; align-items: center; padding: 10px 0; }
.list-scroll .thumb { width: 25px; height: 41px; background: #cdcdcd; border: none; margin: 8px 0 auto; }
.dialog-buttons { display: flex; margin-top: 28px; gap: 17px; }
.dialog-buttons button { width: 127px; height: 37px; background: #e1e1e1; border: 1px solid #adadad; justify-content: center; }
.dialog-buttons .format { width: 145px; margin-right: auto; }
.dialog-buttons .ok { background: #e0eefa; border-color: #4a7fae; }
.grip { position: absolute; right: 0; bottom: 0; }
.pointer { position: absolute; left: 1087px; top: 908px; }

/* tutorial marks */
.mark-box { position: absolute; left: 163px; top: 167px; width: 144px; height: 36px; border: 2px solid #a52a25; border-radius: 7px; }
.arrow { position: absolute; fill: #b02318; }
.a1 { left: 1130px; top: 90px; }
.a3 { left: 810px; top: 784px; }
.a4 { left: 1808px; top: 785px; }
.mark { position: absolute; color: #a8241e; font-size: 38px; line-height: 40px; }
.m1 { left: 1200px; top: 112px; }
.m2 { left: 259px; top: 211px; }
.m3 { left: 861px; top: 788px; }
.m4 { left: 1866px; top: 792px; }
.m-out { left: 1778px; top: 859px; font-size: 35px; }
.scan { position: absolute; left: 1892px; top: 1024px; width: 58px; height: 58px; border-radius: 50%; background: #6c6c6c; justify-content: center; }
.speck { position: absolute; left: 1969px; top: 206px; color: #000; line-height: 24px; }
```

FILE: grid.js
```js
const letters = ['A', 'B', 'C', 'D', 'E', 'F', 'G', 'H', 'I', 'J', 'K', 'L', 'M', ''];

const filtered = '<button class="drop" aria-label="Filter"><svg width="18" height="16"><use href="#filtered"/></svg></button>';
const drop = '<button class="drop" aria-label="Filter"><svg width="10" height="6"><use href="#caret"/></svg></button>';
const minus = '<span class="minus"></span>';

// cell -> [classes, html]
const cells = {
  A1: ['fill', 'Orientation'], B1: ['fill', 'upright' + filtered],
  A2: ['fill edge', 'Impurity'], B2: ['fill edge', 'Impurity B' + filtered],
  A4: ['fill bold cursor', 'Percent of Label'], B4: ['fill', drop], C4: ['fill', ''], D4: ['fill', ''],
  A5: ['fill', ''], B5: ['fill bold', minus + '30C/65RH'], C5: ['fill bold', minus + '40C/75RH'], D5: ['fill', ''],
  A6: ['fill bold edge', 'Formulation' + drop], B6: ['fill bold edge', 'R2'], C6: ['fill bold edge', 'R1'], D6: ['fill bold edge', 'R2']
};

const data = [
  ['F2', '0.38%', '0.51%', '0.59%'],
  ['F4', '0.41%', '0.50%', '0.63%'],
  ['F6', '0.41%', '0.52%', '0.58%']
];
data.forEach((row, r) => {
  row.forEach((value, c) => {
    cells[letters[c] + (r + 7)] = [c ? 'plain num' : 'plain', value];
  });
});

let head = '<th class="corner"><svg width="20" height="20" viewBox="0 0 20 20"><path d="M20 0V20H0Z" fill="#b4b4b4"/></svg></th>';
letters.forEach(l => {
  head += `<th class="${l === 'A' ? 'sel' : ''}">${l}</th>`;
});
document.getElementById('letters').innerHTML = head;

let html = '';
for (let r = 1; r <= 24; r++) {
  html += `<tr><th class="${r === 4 ? 'sel' : ''}">${r}</th>`;
  letters.forEach(l => {
    const cell = cells[l + r] || ['', ''];
    html += `<td class="${cell[0]}">${cell[1]}</td>`;
  });
  html += '</tr>';
}
document.getElementById('rows').innerHTML = html;
```
